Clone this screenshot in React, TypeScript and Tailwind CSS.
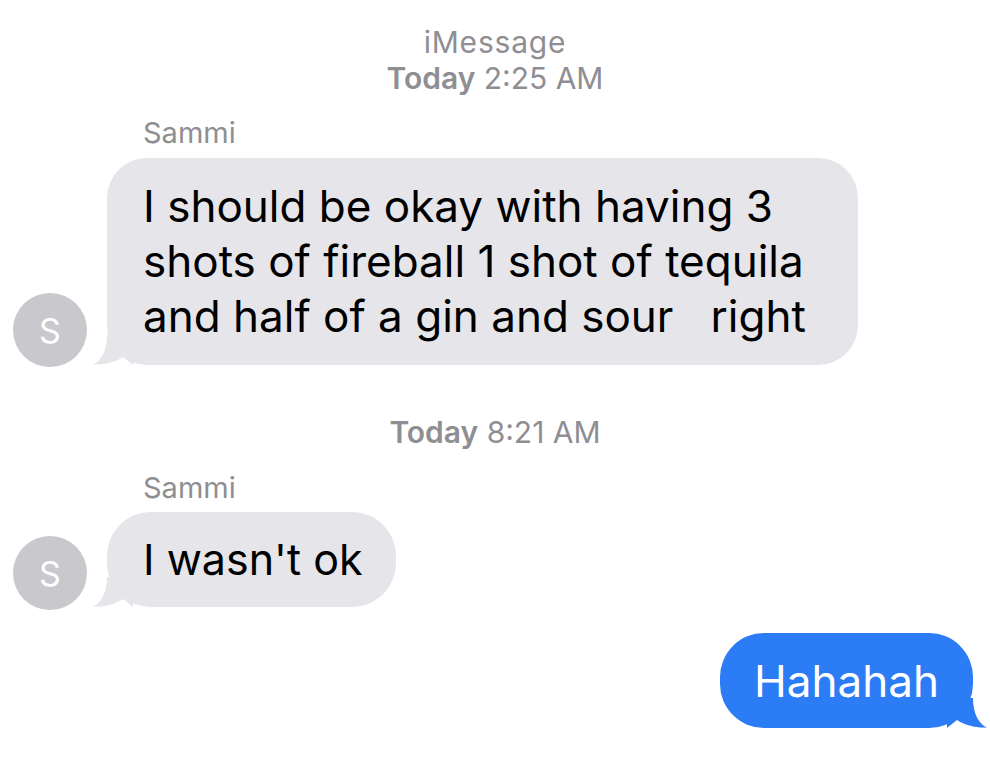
import React from "react";

const font = { fontFamily: 'Inter, "Liberation Sans", Arial, sans-serif' };

const Avatar = () => (
  <div className="w-[74px] h-[74px] rounded-full bg-[#c8c8cd] flex items-center justify-center text-white text-[34px] shrink-0">
    S
  </div>
);

const LeftTail = () => (
  <svg className="absolute left-[-14px] bottom-0" width="40" height="30" viewBox="0 0 40 30">
    <path d="M14 0 C14 16 8 26 0 29.5 C12 30 22 27 30 22 L40 30 L40 0 Z" fill="#e5e5ea" />
  </svg>
);

const RightTail = () => (
  <svg className="absolute right-[-14px] bottom-0" width="40" height="30" viewBox="0 0 40 30">
    <path d="M26 0 C26 16 32 26 40 29.5 C28 30 18 27 10 22 L0 30 L0 0 Z" fill="#2c7cf6" />
  </svg>
);

const Stamp = ({ time }: { time: string }) => (
  <div className="text-center text-[30px] text-[#8e8e93] leading-[36px]">
    <span className="font-semibold">Today</span> {time}
  </div>
);

export default function App() {
  return (
    <div className="w-[990px] h-[766px] bg-white overflow-hidden" style={font}>
      <div className="pt-[24px] flex flex-col">
        <div className="text-center text-[30px] text-[#8e8e93] leading-[36px] tracking-[0.8px]">iMessage</div>
        <Stamp time="2:25 AM" />

        {/* first message */}
        <div className="mt-[21px] pl-[143px] text-[29px] text-[#8e8e93] leading-[32px]">Sammi</div>
        <div className="mt-[9px] flex items-end pl-[13px]">
          <div className="mb-[-2px]">
            <Avatar />
          </div>
          <div className="relative ml-[20px] w-[751px] bg-[#e5e5ea] rounded-[40px] pl-[36px] pr-[20px] pt-[21px] pb-[21px] text-[44px] leading-[55px] text-black">
            <LeftTail />
            <span className="relative">
              I should be okay with having 3<br />
              shots of fireball 1 shot of tequila<br />
              and half of a gin and sour&nbsp;&nbsp;&nbsp;right
            </span>
          </div>
        </div>

        <div className="mt-[49px]">
          <Stamp time="8:21 AM" />
        </div>

        {/* second message */}
        <div className="mt-[22px] pl-[143px] text-[29px] text-[#8e8e93] leading-[32px]">Sammi</div>
        <div className="mt-[8px] flex items-end pl-[13px]">
          <div className="mb-[-3px]">
            <Avatar />
          </div>
          <div className="relative ml-[20px] w-[289px] h-[95px] bg-[#e5e5ea] rounded-[44px] pl-[36px] flex items-center text-[43px] text-black">
            <LeftTail />
            <span className="relative">I wasn't ok</span>
          </div>
        </div>

        {/* reply */}
        <div className="mt-[26px] flex justify-end pr-[17px]">
          <div className="relative w-[253px] h-[95px] bg-[#2c7cf6] rounded-[44px] flex items-center justify-center text-[44px] text-white">
            <RightTail />
            <span className="relative">Hahahah</span>
          </div>
        </div>
      </div>
    </div>
  );
}
